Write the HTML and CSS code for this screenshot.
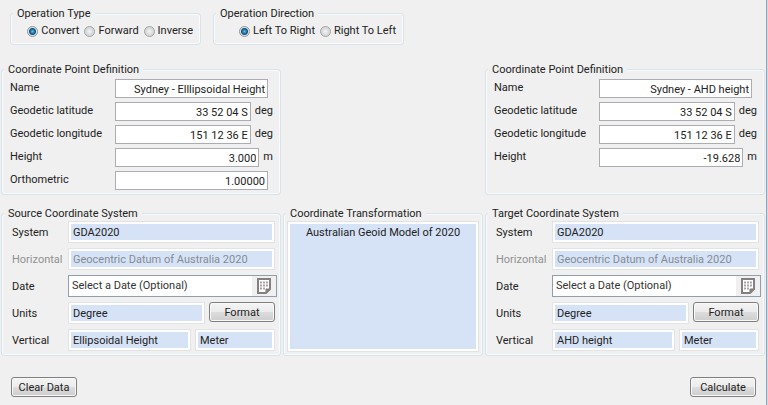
FILE: index.html
```html
<!DOCTYPE html>
<html lang="en">
<head>
    <meta charset="UTF-8">
    <meta name="viewport" content="width=device-width, initial-scale=1.0">
    <title>Coordinate Transformation</title>
    <link rel="stylesheet" href="styles.css">
</head>
<body>
    <form class="window">
        <div class="options">
            <fieldset class="group option-group">
                <legend>Operation Type</legend>
                <div class="radios">
                    <label><input type="radio" name="operation" checked>Convert</label>
                    <label><input type="radio" name="operation">Forward</label>
                    <label><input type="radio" name="operation">Inverse</label>
                </div>
            </fieldset>
            <fieldset class="group option-group">
                <legend>Operation Direction</legend>
                <div class="radios">
                    <label><input type="radio" name="direction" checked>Left To Right</label>
                    <label><input type="radio" name="direction">Right To Left</label>
                </div>
            </fieldset>
        </div>

        <div class="panels">
            <!-- Point definitions -->
            <fieldset class="group">
                <legend>Coordinate Point Definition</legend>
                <div class="point">
                    <div class="point-row no-unit">
                        <label for="srcName">Name</label>
                        <input type="text" id="srcName" value="Sydney - Elllipsoidal Height">
                    </div>
                    <div class="point-row">
                        <label for="srcLat">Geodetic latitude</label>
                        <input type="text" id="srcLat" value="33 52 04 S">
                        <span class="unit">deg</span>
                    </div>
                    <div class="point-row">
                        <label for="srcLon">Geodetic longitude</label>
                        <input type="text" id="srcLon" value="151 12 36 E">
                        <span class="unit">deg</span>
                    </div>
                    <div class="point-row">
                        <label for="srcHeight">Height</label>
                        <input type="text" id="srcHeight" value="3.000">
                        <span class="unit">m</span>
                    </div>
                    <div class="point-row no-unit">
                        <label for="srcOrtho">Orthometric</label>
                        <input type="text" id="srcOrtho" value="1.00000">
                    </div>
                </div>
            </fieldset>

            <fieldset class="group target-point">
                <legend>Coordinate Point Definition</legend>
                <div class="point">
                    <div class="point-row no-unit">
                        <label for="tgtName">Name</label>
                        <input type="text" id="tgtName" value="Sydney - AHD height">
                    </div>
                    <div class="point-row">
                        <label for="tgtLat">Geodetic latitude</label>
                        <input type="text" id="tgtLat" value="33 52 04 S">
                        <span class="unit">deg</span>
                    </div>
                    <div class="point-row">
                        <label for="tgtLon">Geodetic longitude</label>
                        <input type="text" id="tgtLon" value="151 12 36 E">
                        <span class="unit">deg</span>
                    </div>
                    <div class="point-row">
                        <label for="tgtHeight">Height</label>
                        <input type="text" id="tgtHeight" value="-19.628">
                        <span class="unit">m</span>
                    </div>
                </div>
            </fieldset>

            <!-- Coordinate systems -->
            <fieldset class="group">
                <legend>Source Coordinate System</legend>
                <div class="system">
                    <div class="system-row">
                        <label for="srcSystem">System</label>
                        <input type="text" class="field" id="srcSystem" value="GDA2020" readonly>
                    </div>
                    <div class="system-row">
                        <label class="dim" for="srcHorizontal">Horizontal</label>
                        <input type="text" class="field" id="srcHorizontal" value="Geocentric Datum of Australia 2020" disabled>
                    </div>
                    <div class="system-row date-row">
                        <label for="srcDate">Date</label>
                        <div class="date-picker">
                            <input type="text" id="srcDate" placeholder="Select a Date (Optional)">
                            <button type="button" aria-label="Pick a date">
                                <svg width="16" height="16" viewBox="0 0 16 16">
                                    <path d="M2 1h12v10l-4 4H2z" fill="#fff" stroke="#857f7f" stroke-width="2"/>
                                    <path d="M14 11h-4v4z" fill="#857f7f" stroke="#857f7f"/>
                                    <path d="M4 4.5h8M4 7.5h8M4 10.5h5" stroke="#aaa5a5" stroke-width="2" stroke-dasharray="2 1"/>
                                </svg>
                            </button>
                        </div>
                    </div>
                    <div class="system-row">
                        <label for="srcUnits">Units</label>
                        <input type="text" class="field" id="srcUnits" value="Degree" readonly>
                        <button type="button" class="btn">Format</button>
                    </div>
                    <div class="system-row">
                        <label for="srcVertical">Vertical</label>
                        <input type="text" class="field" id="srcVertical" value="Ellipsoidal Height" readonly>
                        <input type="text" class="field field-unit" aria-label="Vertical unit" value="Meter" readonly>
                    </div>
                </div>
            </fieldset>

            <fieldset class="group transform-group">
                <legend>Coordinate Transformation</legend>
                <ul class="transform-list">
                    <li>Australian Geoid Model of 2020</li>
                </ul>
            </fieldset>

            <fieldset class="group">
                <legend>Target Coordinate System</legend>
                <div class="system">
                    <div class="system-row">
                        <label for="tgtSystem">System</label>
                        <input type="text" class="field" id="tgtSystem" value="GDA2020" readonly>
                    </div>
                    <div class="system-row">
                        <label class="dim" for="tgtHorizontal">Horizontal</label>
                        <input type="text" class="field" id="tgtHorizontal" value="Geocentric Datum of Australia 2020" disabled>
                    </div>
                    <div class="system-row date-row">
                        <label for="tgtDate">Date</label>
                        <div class="date-picker">
                            <input type="text" id="tgtDate" placeholder="Select a Date (Optional)">
                            <button type="button" aria-label="Pick a date">
                                <svg width="16" height="16" viewBox="0 0 16 16">
                                    <path d="M2 1h12v10l-4 4H2z" fill="#fff" stroke="#857f7f" stroke-width="2"/>
                                    <path d="M14 11h-4v4z" fill="#857f7f" stroke="#857f7f"/>
                                    <path d="M4 4.5h8M4 7.5h8M4 10.5h5" stroke="#aaa5a5" stroke-width="2" stroke-dasharray="2 1"/>
                                </svg>
                            </button>
                        </div>
                    </div>
                    <div class="system-row">
                        <label for="tgtUnits">Units</label>
                        <input type="text" class="field" id="tgtUnits" value="Degree" readonly>
                        <button type="button" class="btn">Format</button>
                    </div>
                    <div class="system-row">
                        <label for="tgtVertical">Vertical</label>
                        <input type="text" class="field" id="tgtVertical" value="AHD height" readonly>
                        <input type="text" class="field field-unit" aria-label="Vertical unit" value="Meter" readonly>
                    </div>
                </div>
            </fieldset>
        </div>

        <div class="actions">
            <button type="reset" class="btn">Clear Data</button>
            <button type="button" class="btn">Calculate</button>
        </div>
    </form>
</body>
</html>
```
FILE: styles.css
```css
* {
    margin: 0;
    padding: 0;
    box-sizing: border-box;
}

body {
    background: #f0f0f0;
    color: #222;
    font-family: Roboto, "Open Sans", sans-serif;
    font-size: 11px;
    line-height: 16px;
}

input,
button {
    font: inherit;
    color: inherit;
}

.window {
    min-height: 100vh;
    margin-right: 1px;
    padding: 5px 1px 8px 1px;
    border-right: 1px solid #93a3b5;
    box-shadow: 1px 0 0 #c9dcef;
}

.group {
    min-width: 0;
    border: 1px solid #d8e4ec;
    border-radius: 3px;
    box-shadow: inset 0 0 0 1px #f8fafb;
}

.group legend {
    margin-left: 2px;
    padding: 1px 4px 0;
    line-height: 15px;
    background: #f0f0f0;
}

/* Operation options */
.options {
    display: flex;
    gap: 12px;
    padding-left: 9px;
    margin-bottom: 16px;
}

.option-group {
    width: 191px;
}

.radios {
    display: flex;
    justify-content: flex-end;
    gap: 5px;
    padding: 2px 7px 5px 0;
}

.radios label {
    display: flex;
    align-items: center;
    gap: 3px;
}

.radios input {
    appearance: none;
    width: 11px;
    height: 11px;
    border: 1px solid #a0a0a0;
    border-radius: 50%;
    background: radial-gradient(circle, #f4f4f4 0, #d4d6d8 60%, #f4f4f4 100%);
}

.radios input:checked {
    border-color: #8c959c;
    background: radial-gradient(circle, #5cc3ea 0, #1d78ad 2px, #1b4c70 3px, #dfe6ea 4px);
}

/* Panels */
.panels {
    display: grid;
    grid-template-columns: minmax(0, 7fr) minmax(0, 5fr) minmax(0, 7fr);
    gap: 10px 2px;
}

.target-point {
    grid-column: 3;
}

.point {
    display: flex;
    flex-direction: column;
    gap: 4px;
    padding: 2px 7px 4px 8px;
}

.point-row {
    display: flex;
    gap: 4px;
    height: 19px;
    line-height: 18px;
}

.no-unit {
    padding-right: 5px;
}

.point-row label {
    width: 101px;
}

.point-row input {
    flex: 1;
    min-width: 0;
    padding: 2px 2px 0;
    border: 1px solid #abadb3;
    background: #fff;
    text-align: right;
}

.system {
    display: flex;
    flex-direction: column;
    gap: 5px;
    padding: 0 5px 4px 10px;
}

.system-row {
    display: flex;
    gap: 4px;
    height: 22px;
    line-height: 24px;
}

.system-row label {
    width: 52px;
}

.system-row .dim {
    color: #909090;
}

.field {
    flex: 1;
    min-width: 0;
    padding: 2px 4px 0;
    border: 1px solid #e2e3e6;
    background: #d6e3f7;
    box-shadow: inset 0 0 0 2px #fff;
}

.field:disabled {
    color: #858b93;
}

.field-unit {
    flex: 0 0 80px;
}

.date-row {
    margin-right: -2px;
}

.date-picker {
    display: flex;
    flex: 1;
    min-width: 0;
    border: 1px solid #8f9fae;
}

.date-picker input {
    flex: 1;
    min-width: 0;
    padding: 0 3px;
    border: none;
    background: #fff;
}

.date-picker input::placeholder {
    color: #333;
}

.date-picker button {
    display: flex;
    align-items: center;
    justify-content: center;
    width: 24px;
    border: none;
    background: #f0f0f0;
}

.transform-group {
    display: flex;
}

.transform-list {
    flex: 1;
    margin: 0 3px 3px;
    padding: 3px;
    border: 1px solid #e2e3e6;
    background: #d6e3f7;
    box-shadow: inset 0 0 0 2px #fff;
    list-style: none;
    text-align: center;
}

/* Buttons */
.btn {
    width: 66px;
    height: 20px;
    padding-top: 1px;
    line-height: 17px;
    border: 1px solid #808080;
    border-radius: 3px;
    background: linear-gradient(#f4f4f4, #ebebeb 50%, #dddddd 50%, #cdcdcd);
    box-shadow: inset 0 0 0 1px #f8f8f8;
}

.btn:hover {
    border-color: #3c7fb1;
}

.actions {
    display: flex;
    justify-content: space-between;
    margin-top: 21px;
    padding: 0 9px 0 10px;
}
```
